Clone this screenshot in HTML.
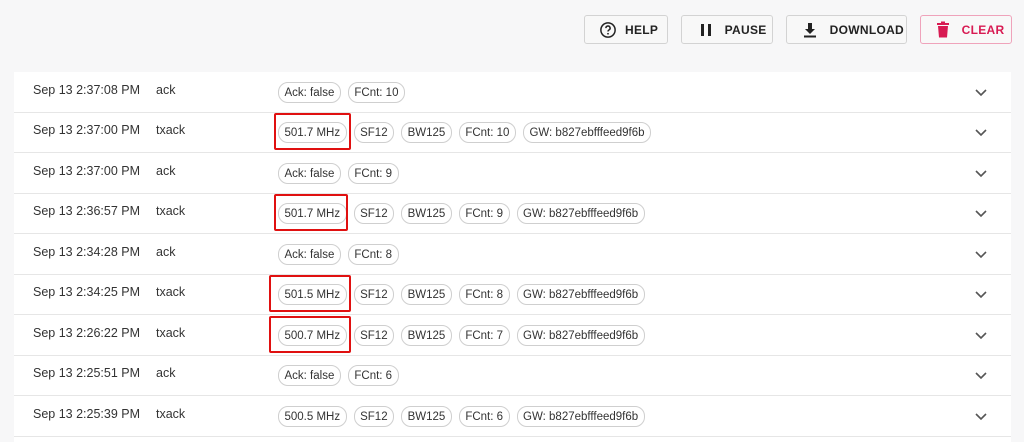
<!DOCTYPE html>
<html><head><style>
body{margin:0;width:1024px;height:428px;background:#f7f7f8;font-family:"Liberation Sans",Roboto,sans-serif;overflow:hidden;position:relative;color:#333}
.btn{position:absolute;top:15px;height:29px;border:1px solid #d3d3d3;border-radius:3px;background:#f8f8f8;box-sizing:border-box;display:flex;align-items:center;font-size:12px;font-weight:bold;letter-spacing:.3px;color:#222}
.btn svg{margin-right:8px}
.card{position:absolute;left:14px;top:72px;width:997px;height:370px;background:#fff}
.row{position:absolute;left:0;width:997px;height:40px;border-bottom:1px solid #e6e6e6}
.d{position:absolute;left:19px;top:11px;font-size:12.5px;color:#333}
.t{position:absolute;left:142px;top:11px;font-size:12.5px;color:#333}
.chips{position:absolute;left:264px;top:10px;display:flex}
.c{height:19px;box-sizing:content-box;border:1px solid #cfcfcf;border-radius:10px;padding:1px 5.5px 0;font-size:11.5px;line-height:18px;height:18px;margin-right:7px;color:#333;white-space:nowrap}
.chev{position:absolute;left:960px;top:15px}
.red{position:absolute;border:2px solid #e01010;border-radius:2px;box-sizing:border-box}
</style></head><body>
<div class="btn" style="left:584px;width:84px;padding-left:14px"><svg width="18" height="18" viewBox="0 0 24 24"><circle cx="12" cy="12" r="9.5" fill="none" stroke="#222" stroke-width="2"/><path d="M9.2 9.5a2.8 2.8 0 1 1 4 2.5c-.9.5-1.2 1-1.2 2" fill="none" stroke="#222" stroke-width="2"/><circle cx="12" cy="17" r="1.2" fill="#222"/></svg>HELP</div>
<div class="btn" style="left:681px;width:92px;padding-left:17px"><svg width="14" height="14" viewBox="0 0 14 14"><rect x="2" y="1" width="3" height="12" fill="#222"/><rect x="9" y="1" width="3" height="12" fill="#222"/></svg>&nbsp;PAUSE</div>
<div class="btn" style="left:786px;width:121px;padding-left:15px"><svg width="16" height="16" viewBox="0 0 16 16"><path d="M6 1h4v6h3l-5 5-5-5h3z" fill="#222"/><rect x="2" y="13.5" width="12" height="2" fill="#222"/></svg>&nbsp;DOWNLOAD</div>
<div class="btn" style="left:920px;width:92px;padding-left:15px;border-color:#efa3bb;color:#d81b53"><svg width="14" height="17" viewBox="0 0 14 17"><rect x="1" y="2" width="12" height="2" fill="#d81b53"/><rect x="5" y="0.5" width="4" height="2" fill="#d81b53"/><path d="M2 5h10l-1 11.5H3z" fill="#d81b53"/></svg>&nbsp;CLEAR</div>
<div class="card">
<div class="row" style="top:0"><span class="d">Sep 13 2:37:08 PM</span><span class="t">ack</span><div class="chips"><span class="c">Ack: false</span><span class="c">FCnt: 10</span></div><svg class="chev" width="14" height="10" viewBox="0 0 14 10"><path d="M2 3l5 5 5-5" fill="none" stroke="#555" stroke-width="1.6"/></svg></div>
<div class="row" style="top:40px"><span class="d">Sep 13 2:37:00 PM</span><span class="t">txack</span><div class="chips"><span class="c">501.7 MHz</span><span class="c">SF12</span><span class="c">BW125</span><span class="c">FCnt: 10</span><span class="c">GW: b827ebfffeed9f6b</span></div><svg class="chev" width="14" height="10" viewBox="0 0 14 10"><path d="M2 3l5 5 5-5" fill="none" stroke="#555" stroke-width="1.6"/></svg></div>
<div class="row" style="top:80.5px"><span class="d">Sep 13 2:37:00 PM</span><span class="t">ack</span><div class="chips"><span class="c">Ack: false</span><span class="c">FCnt: 9</span></div><svg class="chev" width="14" height="10" viewBox="0 0 14 10"><path d="M2 3l5 5 5-5" fill="none" stroke="#555" stroke-width="1.6"/></svg></div>
<div class="row" style="top:121px"><span class="d">Sep 13 2:36:57 PM</span><span class="t">txack</span><div class="chips"><span class="c">501.7 MHz</span><span class="c">SF12</span><span class="c">BW125</span><span class="c">FCnt: 9</span><span class="c">GW: b827ebfffeed9f6b</span></div><svg class="chev" width="14" height="10" viewBox="0 0 14 10"><path d="M2 3l5 5 5-5" fill="none" stroke="#555" stroke-width="1.6"/></svg></div>
<div class="row" style="top:161.5px"><span class="d">Sep 13 2:34:28 PM</span><span class="t">ack</span><div class="chips"><span class="c">Ack: false</span><span class="c">FCnt: 8</span></div><svg class="chev" width="14" height="10" viewBox="0 0 14 10"><path d="M2 3l5 5 5-5" fill="none" stroke="#555" stroke-width="1.6"/></svg></div>
<div class="row" style="top:202px"><span class="d">Sep 13 2:34:25 PM</span><span class="t">txack</span><div class="chips"><span class="c">501.5 MHz</span><span class="c">SF12</span><span class="c">BW125</span><span class="c">FCnt: 8</span><span class="c">GW: b827ebfffeed9f6b</span></div><svg class="chev" width="14" height="10" viewBox="0 0 14 10"><path d="M2 3l5 5 5-5" fill="none" stroke="#555" stroke-width="1.6"/></svg></div>
<div class="row" style="top:242.5px"><span class="d">Sep 13 2:26:22 PM</span><span class="t">txack</span><div class="chips"><span class="c">500.7 MHz</span><span class="c">SF12</span><span class="c">BW125</span><span class="c">FCnt: 7</span><span class="c">GW: b827ebfffeed9f6b</span></div><svg class="chev" width="14" height="10" viewBox="0 0 14 10"><path d="M2 3l5 5 5-5" fill="none" stroke="#555" stroke-width="1.6"/></svg></div>
<div class="row" style="top:283px"><span class="d">Sep 13 2:25:51 PM</span><span class="t">ack</span><div class="chips"><span class="c">Ack: false</span><span class="c">FCnt: 6</span></div><svg class="chev" width="14" height="10" viewBox="0 0 14 10"><path d="M2 3l5 5 5-5" fill="none" stroke="#555" stroke-width="1.6"/></svg></div>
<div class="row" style="top:323.5px"><span class="d">Sep 13 2:25:39 PM</span><span class="t">txack</span><div class="chips"><span class="c">500.5 MHz</span><span class="c">SF12</span><span class="c">BW125</span><span class="c">FCnt: 6</span><span class="c">GW: b827ebfffeed9f6b</span></div><svg class="chev" width="14" height="10" viewBox="0 0 14 10"><path d="M2 3l5 5 5-5" fill="none" stroke="#555" stroke-width="1.6"/></svg></div>
</div>
<div class="red" style="left:274px;top:113px;width:77px;height:37px"></div>
<div class="red" style="left:274px;top:194px;width:74px;height:37px"></div>
<div class="red" style="left:269px;top:275px;width:82px;height:37px"></div>
<div class="red" style="left:269px;top:316px;width:82px;height:37px"></div>
</body></html>
